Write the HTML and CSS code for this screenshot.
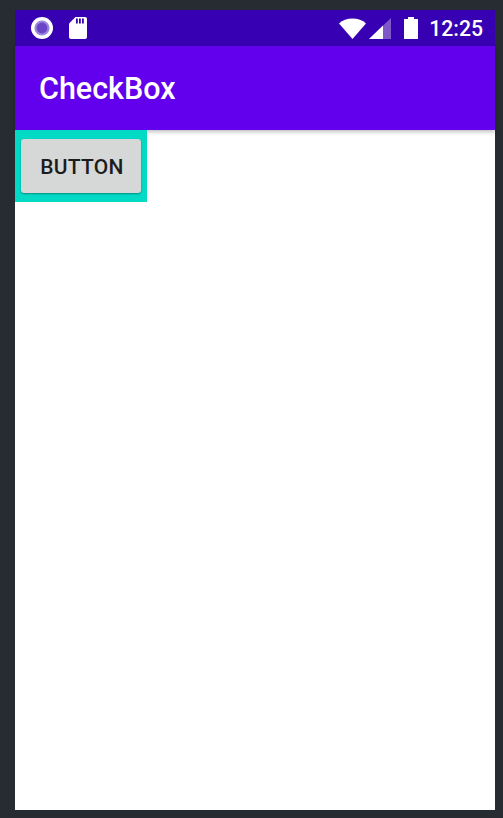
FILE: index.html
```html
<!DOCTYPE html>
<html lang="en">
<head>
    <meta charset="UTF-8">
    <meta name="viewport" content="width=device-width, initial-scale=1.0">
    <title>CheckBox</title>
    <link rel="stylesheet" href="styles.css">
</head>
<body>
    <div class="phone">
        <div class="status-bar">
            <div class="status-left">
                <svg class="icon-record" width="22" height="22" viewBox="0 0 22 22">
                    <circle cx="11" cy="11" r="11" fill="#fff"/>
                    <circle cx="11" cy="11" r="7.6" fill="#9b86de"/>
                    <circle cx="11" cy="11" r="5.4" fill="#6a45c6"/>
                </svg>
                <svg class="icon-sd" width="18" height="22" viewBox="0 0 18 22">
                    <path d="M6.500 0H16a2 2 0 0 1 2 2v18a2 2 0 0 1-2 2H2a2 2 0 0 1-2-2V6.500z" fill="#fff"/>
                    <path d="M7 1.500h1.800v5H7zM10 1.500h1.800v5H10zM13 1.500h1.800v5H13z" fill="#3700b3"/>
                </svg>
            </div>
            <div class="status-right">
                <svg class="icon-wifi" width="27" height="21" viewBox="0 0 27 21">
                    <path d="M0 5.500C3.500 2 8 0.500 13.500 0.500S23.500 2 27 5.500L13.500 21z" fill="#fff"/>
                </svg>
                <svg class="icon-signal" width="22" height="21" viewBox="0 0 22 21">
                    <path d="M22 0V21H0z" fill="#7e57c9"/>
                    <path d="M14 7.600V21H0z" fill="#fff"/>
                </svg>
                <svg class="icon-battery" width="14" height="22" viewBox="0 0 14 22">
                    <path d="M4 0h6v2h3.500a0.500 0.500 0 0 1 0.500 0.500v19a0.500 0.500 0 0 1-0.500 0.500H0.500a0.500 0.500 0 0 1-0.500-0.500v-19a0.500 0.500 0 0 1 0.500-0.500H4z" fill="#fff"/>
                </svg>
                <span class="clock">12:25</span>
            </div>
        </div>
        <div class="app-bar">
            <h1 class="app-title">CheckBox</h1>
        </div>
        <div class="content">
            <div class="button-wrap">
                <button class="flat-button">BUTTON</button>
            </div>
        </div>
    </div>
</body>
</html>
```

FILE: styles.css
```css
html,
body {
    height: 100%;
}

body {
    margin: 0;
    padding: 10px 8px 8px 15px;
    box-sizing: border-box;
    background-color: #272c33;
    font-family: Roboto, 'Liberation Sans', sans-serif;
}

.phone {
    display: flex;
    flex-direction: column;
    width: 480px;
    height: 800px;
    background-color: #fff;
}

.status-bar {
    display: flex;
    justify-content: space-between;
    align-items: center;
    height: 36px;
    padding: 0 12px 0 16px;
    background-color: #3700b3;
}

.status-left,
.status-right {
    display: flex;
    align-items: center;
}

.status-left {
    gap: 16px;
}

.icon-signal {
    margin-left: 3px;
}

.icon-battery {
    margin-left: 13px;
}

.clock {
    margin-left: 11px;
    font-size: 21.2px;
    font-weight: 500;
    color: #fff;
}

.app-bar {
    display: flex;
    align-items: center;
    height: 84px;
    padding-left: 24px;
    background-color: #6200ee;
    box-shadow: 0 2px 4px rgba(0, 0, 0, 0.25);
    position: relative;
}

.app-title {
    margin: 0;
    font-size: 30.5px;
    font-weight: 500;
    color: #fff;
}

.content {
    flex: 1;
}

.button-wrap {
    display: flex;
    align-items: center;
    justify-content: center;
    width: 132px;
    height: 72px;
    background-color: #03dac5;
    position: relative;
}

.flat-button {
    width: 120px;
    height: 54px;
    padding: 2px 0 0 2px;
    border: none;
    border-radius: 3px;
    background-color: #d6d7d7;
    box-shadow: 0 1px 2px rgba(0, 0, 0, 0.35);
    font-family: Roboto, 'Liberation Sans', sans-serif;
    font-size: 21px;
    font-weight: 500;
    letter-spacing: 0.3px;
    color: #1c1c1c;
}
```
